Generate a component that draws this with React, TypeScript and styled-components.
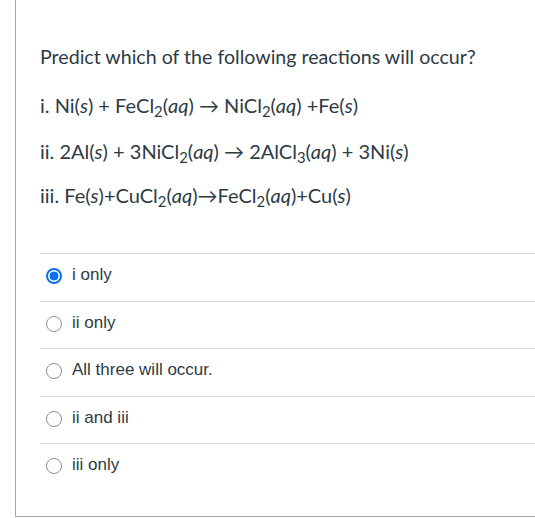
import React, { useState } from 'react';
import styled, { createGlobalStyle } from 'styled-components';

const GlobalStyle = createGlobalStyle`
  html, body {
    margin: 0;
    padding: 0;
    background: #ffffff;
    overflow: hidden;
  }
`;

const Page = styled.div`
  width: 535px;
  height: 518px;
  padding-left: 15px;
  box-sizing: border-box;
  overflow: hidden;
`;

const Card = styled.div`
  width: 560px;
  border-left: 1px solid #a5a5a5;
  border-bottom: 1px solid #a5a5a5;
  padding: 45px 0 25px 24px;
  box-sizing: border-box;
  color: #2d3b45;
`;

const Question = styled.div`
  font-family: Lato, "Liberation Sans", sans-serif;
  line-height: 24px;
`;

const Line = styled.p<{ $gap: number; $size: number }>`
  margin: 0 0 ${p => p.$gap}px 0;
  font-size: ${p => p.$size}px;
  white-space: nowrap;

  sub {
    font-size: 0.74em;
    line-height: 0;
    vertical-align: -0.28em;
  }

  i {
    font-style: italic;
  }
`;

const Answers = styled.div`
  margin-top: 46px;
`;

const Option = styled.label`
  display: flex;
  align-items: center;
  gap: 10px;
  height: 47.5px;
  box-sizing: border-box;
  border-top: 1px solid #dcdcdc;
  padding-left: 6px;
  padding-bottom: 4px;
  font-family: "Liberation Sans", Arial, sans-serif;
  font-size: 17px;
  cursor: pointer;
`;

const Radio = styled.span<{ $checked: boolean }>`
  width: 16px;
  height: 16px;
  flex: none;
  margin-top: 2px;
  border-radius: 50%;
  box-sizing: border-box;
  border: ${p => (p.$checked ? '2px solid #0a74ec' : '1px solid #8f8f8f')};
  background: ${p => (p.$checked ? 'radial-gradient(circle, #0a74ec 0 4.2px, #ffffff 4.8px)' : '#ffffff')};
`;

const options = ['i only', 'ii only', 'All three will occur.', 'ii and iii', 'iii only'];

export default function App() {
  const [selected, setSelected] = useState(0);

  return (
    <Page>
      <GlobalStyle />
      <Card>
        <Question>
          <Line $gap={24} $size={19.6}>Predict which of the following reactions will occur?</Line>
          <Line $gap={22} $size={20}>
            i. Ni(<i>s</i>) + FeCl<sub>2</sub>(<i>aq</i>) → NiCl<sub>2</sub>(<i>aq</i>) +Fe(<i>s</i>)
          </Line>
          <Line $gap={20} $size={20}>
            ii. 2Al(<i>s</i>) + 3NiCl<sub>2</sub>(<i>aq</i>) → 2AlCl<sub>3</sub>(<i>aq</i>) + 3Ni(<i>s</i>)
          </Line>
          <Line $gap={0} $size={20}>
            iii. Fe(<i>s</i>)+CuCl<sub>2</sub>(<i>aq</i>)→FeCl<sub>2</sub>(<i>aq</i>)+Cu(<i>s</i>)
          </Line>
        </Question>
        <Answers>
          {options.map((text, i) => (
            <Option key={text} onClick={() => setSelected(i)}>
              <Radio $checked={selected === i} />
              {text}
            </Option>
          ))}
        </Answers>
      </Card>
    </Page>
  );
}
